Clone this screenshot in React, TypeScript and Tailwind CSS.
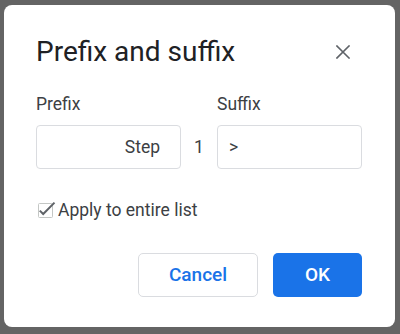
const font = { fontFamily: "Roboto, 'Liberation Sans', sans-serif" };

const CloseIcon = () => (
  <svg width="14" height="14" viewBox="0 0 14 14" fill="none">
    <path d="M1 1L13 13M13 1L1 13" stroke="#5f6368" strokeWidth="1.6" strokeLinecap="square" />
  </svg>
);

const CheckBox = () => (
  <svg width="18" height="18" viewBox="0 0 18 18" fill="none" className="shrink-0">
    <rect x="0.5" y="2.5" width="14" height="14" rx="1" stroke="#c4c7c5" />
    <path d="M1.8 9.6L5.2 13L16.5 1.6" stroke="#5f6368" strokeWidth="2" />
  </svg>
);

export default function App() {
  return (
    <div
      className="w-[400px] h-[334px] bg-[#646464] pl-[4px] pt-[5px] overflow-hidden"
      style={font}
    >
      <div className="w-[391px] h-[322px] bg-white rounded-[8px] pl-[32px] pr-[33px] pt-[29px]">
        {/* Header */}
        <div className="flex items-center justify-between h-[36px]">
          <h1 className="text-[28px] leading-[36px] text-[#202124]">Prefix and suffix</h1>
          <button className="mr-[12px] w-[14px] h-[14px] flex items-center justify-center">
            <CloseIcon />
          </button>
        </div>

        {/* Fields */}
        <div className="grid grid-cols-[145px_36px_145px] mt-[22px]">
          <span className="text-[17.5px] leading-[24px] text-[#3c4043]">Prefix</span>
          <span />
          <span className="text-[17.5px] leading-[24px] text-[#3c4043]">Suffix</span>

          <div className="mt-[9px] h-[44px] border border-[#dadce0] rounded-[4px] flex items-center justify-end pr-[20px] text-[17.5px] text-[#3c4043]">
            Step
          </div>
          <div className="mt-[9px] h-[44px] flex items-center justify-center text-[17.5px] text-[#3c4043]">
            1
          </div>
          <div className="mt-[9px] h-[44px] border border-[#dadce0] rounded-[4px] flex items-center pl-[11px] text-[17.5px] text-[#3c4043]">
            &gt;
          </div>
        </div>

        {/* Checkbox */}
        <div className="flex items-center h-[24px] mt-[29px] pl-[2px]">
          <CheckBox />
          <span className="ml-[2px] text-[17.5px] text-[#3c4043]">Apply to entire list</span>
        </div>

        {/* Actions */}
        <div className="flex justify-end gap-[15px] mt-[31px]">
          <button className="w-[120px] h-[44px] border border-[#dadce0] rounded-[5px] text-[19px] font-medium text-[#1a73e8]">
            Cancel
          </button>
          <button className="w-[89px] h-[44px] bg-[#1a73e8] rounded-[5px] text-[19px] font-medium text-white">
            OK
          </button>
        </div>
      </div>
    </div>
  );
}
